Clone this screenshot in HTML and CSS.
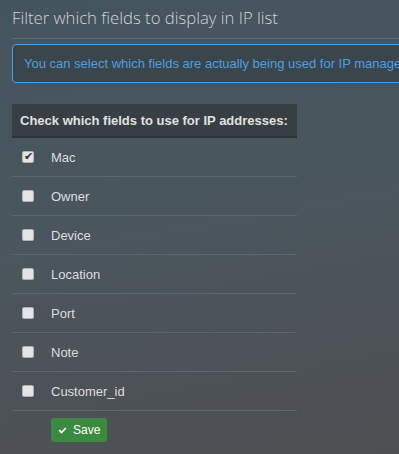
FILE: index.html
```html
<!DOCTYPE html>
<html>
   <head>
      <meta name="viewport" content="width=device-width, initial-scale=1.0">
      <title>IP fields</title>
      <link rel="stylesheet" href="styles.css">
   </head>
<body>
<div class="content">
	<h4 class="pageTitle">Filter which fields to display in IP list</h4>
	<hr class="titleRule">
	<div class="alertInfo">You can select which fields are actually being used for IP management, and which are not needed.</div>

	<table class="fieldTable">
		<tr>
			<th colspan="2">Check which fields to use for IP addresses:</th>
		</tr>
		<tr>
			<td class="checkCell"><input type="checkbox" class="fieldCheck" checked></td>
			<td>Mac</td>
		</tr>
		<tr>
			<td class="checkCell"><input type="checkbox" class="fieldCheck"></td>
			<td>Owner</td>
		</tr>
		<tr>
			<td class="checkCell"><input type="checkbox" class="fieldCheck"></td>
			<td>Device</td>
		</tr>
		<tr>
			<td class="checkCell"><input type="checkbox" class="fieldCheck"></td>
			<td>Location</td>
		</tr>
		<tr>
			<td class="checkCell"><input type="checkbox" class="fieldCheck"></td>
			<td>Port</td>
		</tr>
		<tr>
			<td class="checkCell"><input type="checkbox" class="fieldCheck"></td>
			<td>Note</td>
		</tr>
		<tr>
			<td class="checkCell"><input type="checkbox" class="fieldCheck"></td>
			<td>Customer_id</td>
		</tr>
		<tr class="saveRow">
			<td></td>
			<td>
				<button class="saveBtn">
					<svg class="saveIcon" viewBox="0 0 16 16" width="9" height="9"><path d="M1 8.6 L3.3 6.3 L6.2 9.2 L12.7 2.7 L15 5 L6.2 13.8 Z" fill="#fff"/></svg>
					Save
				</button>
			</td>
		</tr>
	</table>
</div>
</body>
</html>
```

FILE: styles.css
```css
html, body {
	margin: 0;
	padding: 0;
	height: 100%;
}
body {
	overflow: hidden;
	background: linear-gradient(170deg, #44545e 0%, #4a565e 45%, #4e4f52 100%);
	font-family: "Liberation Sans", Arial, sans-serif;
	font-size: 13px;
	color: #dddddd;
}
.content {
	width: 800px;
	padding: 0 12px;
}
.pageTitle {
	margin: 0;
	padding-top: 7px;
	font-family: "Open Sans", sans-serif;
	font-weight: 300;
	font-size: 16.7px;
	line-height: 22px;
	color: #d0d4d6;
}
.titleRule {
	margin: 9px 0 0 0;
	border: 0;
	border-top: 1px solid #5d6a72;
	height: 0;
}
.alertInfo {
	margin-top: 5px;
	height: 37px;
	line-height: 37px;
	padding: 0 11px;
	border: 1px solid #4a9ee6;
	border-radius: 4px;
	background: #3a454c;
	color: #4d9fe0;
	white-space: nowrap;
	overflow: hidden;
}
.fieldTable {
	margin-top: 21px;
	width: 285px;
	border-collapse: collapse;
}
.fieldTable th {
	height: 32px;
	padding: 0 8px;
	text-align: left;
	font-weight: bold;
	background: #373f45;
	border-bottom: 2px solid #2c3337;
	color: #e0e0e0;
}
.fieldTable td {
	height: 38px;
	padding: 0;
	border-bottom: 1px solid #5a6670;
	vertical-align: middle;
}
.fieldTable td.checkCell {
	width: 29px;
	padding-left: 10px;
}
.fieldCheck {
	appearance: none;
	-webkit-appearance: none;
	display: block;
	margin: 0;
	width: 12px;
	height: 12px;
	background: #e4e4e4;
	border: 1px solid #b0b0b0;
	border-radius: 2px;
	position: relative;
}
.fieldCheck:checked::after {
	content: "\2714";
	position: absolute;
	left: 1px;
	top: -2px;
	font-size: 11px;
	color: #333;
	font-family: "DejaVu Sans", sans-serif;
}
.saveRow td {
	border-bottom: 0;
	height: 38px;
}
.saveBtn {
	display: flex;
	align-items: center;
	gap: 6px;
	height: 24px;
	padding: 0 7px;
	border: 0;
	border-radius: 3px;
	background: #3c8a40;
	color: #ffffff;
	font-family: "Liberation Sans", Arial, sans-serif;
	font-size: 12px;
	cursor: pointer;
}
```
